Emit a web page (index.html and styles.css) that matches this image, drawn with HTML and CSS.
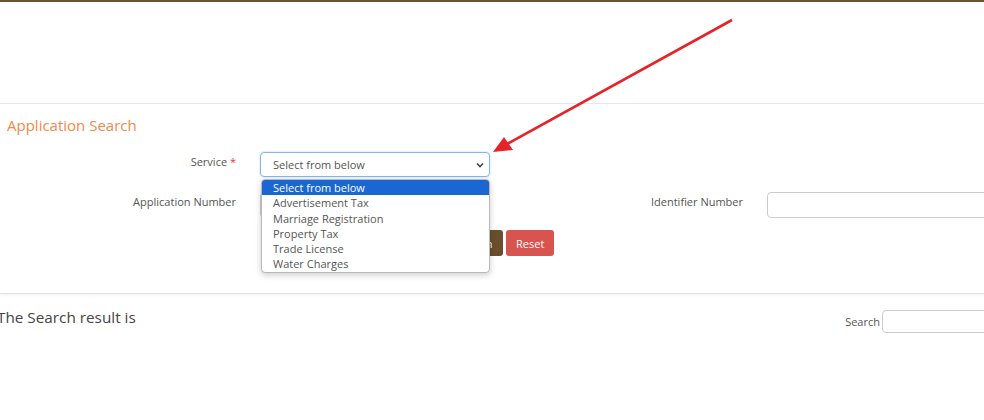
FILE: index.html
```html
<!DOCTYPE html>
<html lang="en">
<head>
  <meta charset="UTF-8">
  <meta name="viewport" content="width=device-width, initial-scale=1.0">
  <title>Application Search</title>
  <link rel="stylesheet" href="styles.css">
</head>
<body>
  <div class="topbar"></div>
  <div class="header-space"></div>

  <!-- Search form -->
  <div class="panel">
    <h2 class="panel-title">Application Search</h2>
    <div class="form-grid">
      <label class="label">Service <span class="req">*</span></label>
      <div class="select">
        <span>Select from below</span>
        <svg class="caret" width="8" height="6" viewBox="0 0 8 6"><path d="M1 1.5 L4 4.5 L7 1.5" fill="none" stroke="#444" stroke-width="1.6"/></svg>
      </div>
      <div></div>
      <div></div>

      <label class="label">Application Number</label>
      <input class="input" type="text">
      <label class="label">Identifier Number</label>
      <input class="input" type="text">
    </div>
    <div class="buttons">
      <button class="btn btn-search">Search</button>
      <button class="btn btn-reset">Reset</button>
    </div>
  </div>

  <!-- Results -->
  <div class="results">
    <h3 class="results-title">The Search result is</h3>
    <div class="filter">
      <label>Search</label>
      <input class="input filter-input" type="text">
    </div>
  </div>

  <!-- open select list -->
  <ul class="options">
    <li class="selected">Select from below</li>
    <li>Advertisement Tax</li>
    <li>Marriage Registration</li>
    <li>Property Tax</li>
    <li>Trade License</li>
    <li>Water Charges</li>
  </ul>

  <!-- annotation arrow -->
  <svg class="arrow" width="984" height="420" viewBox="0 0 984 420">
    <line x1="732" y1="20" x2="507" y2="144" stroke="#e5242a" stroke-width="2.6"/>
    <polygon points="493,152 504,137 513,150" fill="#e5242a"/>
  </svg>
</body>
</html>
```

FILE: styles.css
```css
body {
  margin: 0;
  font-family: "Open Sans", Arial, sans-serif;
  font-size: 11px;
  color: #555;
  background: #fff;
  overflow: hidden;
  width: 984px;
  height: 420px;
  position: relative;
}

.topbar {
  height: 2px;
  background: #6b5332;
}

.header-space {
  height: 101px;
}

.panel {
  border-top: 1px solid #ece6e8;
  border-bottom: 1px solid #e6e0e2;
  box-shadow: 0 1px 3px rgba(0, 0, 0, 0.06);
  padding: 11px 0 37px;
  width: 1020px;
}

.panel-title {
  margin: 0 0 17px 7px;
  font-size: 15px;
  font-weight: 400;
  color: #f0894a;
}

.form-grid {
  display: grid;
  grid-template-columns: 236px 230px 229px 250px;
  column-gap: 24px;
  row-gap: 15px;
  align-items: start;
}

.label {
  text-align: right;
  padding-top: 2px;
  color: #555;
}

.req {
  color: #e0393b;
}

.select {
  height: 25px;
  box-sizing: border-box;
  border: 1px solid #86b7e8;
  border-radius: 4px;
  box-shadow: 0 0 2px rgba(102, 160, 230, 0.5);
  display: flex;
  align-items: center;
  justify-content: space-between;
  padding: 0 5px 0 12px;
  color: #555;
}

.input {
  height: 26px;
  box-sizing: border-box;
  border: 1px solid #ccc;
  border-radius: 4px;
  font-family: inherit;
}

.buttons {
  display: flex;
  gap: 3px;
  margin: 12px 0 0 447px;
}

.btn {
  height: 26px;
  border: none;
  border-radius: 3px;
  color: #fff;
  font-family: inherit;
  font-size: 11px;
  padding: 0 10px;
}

.btn-search {
  background: #6b4e2c;
  width: 56px;
}

.btn-reset {
  background: #d9534f;
  width: 48px;
}

.results {
  display: flex;
  justify-content: space-between;
  align-items: flex-start;
  padding-top: 13px;
  width: 1030px;
  margin-left: -3px;
}

.results-title {
  margin: 0;
  font-size: 15.3px;
  font-weight: 400;
  color: #444;
}

.filter {
  display: flex;
  align-items: center;
  gap: 2px;
  padding-top: 3px;
}

.filter-input {
  width: 145px;
  height: 23px;
}

.options {
  position: absolute;
  left: 261px;
  top: 179px;
  width: 229px;
  box-sizing: border-box;
  margin: 0;
  padding: 0;
  list-style: none;
  background: #fff;
  border: 1px solid #b9b9b9;
  border-radius: 4px;
  box-shadow: 0 2px 6px rgba(0, 0, 0, 0.2);
  overflow: hidden;
  color: #555;
}

.options li {
  height: 15.3px;
  line-height: 15.3px;
  padding-left: 11px;
}

.options li.selected {
  background: #1a66d2;
  color: #fff;
}

.arrow {
  position: absolute;
  left: 0;
  top: 0;
  pointer-events: none;
}
```
